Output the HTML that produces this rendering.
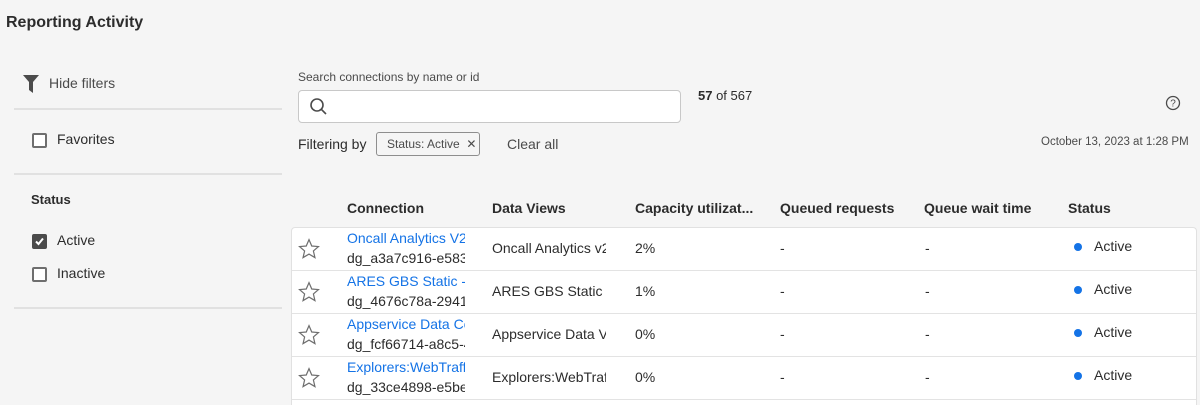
<!DOCTYPE html>
<html style="overflow:hidden;height:405px"><head><style>
body{margin:0;width:1200px;height:405px;background:#f5f5f5;font-family:"Liberation Sans",sans-serif;color:#2c2c2c;position:relative;overflow:hidden}
.a{position:absolute;white-space:nowrap}
.hr{position:absolute;left:14px;width:268px;height:2px;background:#e1e1e1}
.cb{position:absolute;width:11px;height:11px;border:2px solid #6e6e6e;border-radius:2px;background:#fff}
.th{position:absolute;top:200px;font-size:14px;font-weight:bold;color:#2c2c2c}
.tbl{position:absolute;left:291px;top:227px;width:904px;height:177px;background:#fff;border:1px solid #e1e1e1;border-bottom:none;border-radius:4px 4px 0 0;overflow:hidden}
.row{position:absolute;left:0;width:904px;height:42px;border-bottom:1px solid #e3e3e3}
.row div{position:absolute;white-space:nowrap;overflow:hidden;font-size:14px}
.lnk{color:#1473e6;left:55px;top:2px;width:118px}
.id{left:55px;top:22px;width:118px;color:#2c2c2c}
.dv{left:200px;top:12px;width:114px}
.cap{left:343px;top:12px}
.q{left:488px;top:12px}
.w{left:633px;top:12px}
.dot{left:782px;top:15px;width:8px;height:8px;border-radius:50%;background:#1473e6}
.st{left:802px;top:10px}
.star{left:6px;top:10px}
</style></head><body>
<div class="a" style="left:6px;top:14px;font-size:16px;font-weight:bold">Reporting Activity</div>
<svg class="a" style="left:23px;top:75px" width="16" height="18" viewBox="0 0 16 18"><path d="M0 0H16L10 7V18L6 15V7Z" fill="#4b4b4b"/></svg>
<div class="a" style="left:49px;top:75px;font-size:14px;color:#4b4b4b">Hide filters</div>
<div class="hr" style="top:108px"></div>
<div class="cb" style="left:32px;top:133px"></div>
<div class="a" style="left:57px;top:131px;font-size:14px">Favorites</div>
<div class="hr" style="top:173px"></div>
<div class="a" style="left:31px;top:192px;font-size:13px;font-weight:bold">Status</div>
<div class="cb" style="left:32px;top:234px;background:#4b4b4b;border-color:#4b4b4b"></div>
<svg class="a" style="left:33px;top:235px" width="13" height="13"><path d="M3 6.5L5.5 9L10 3.5" stroke="#fff" stroke-width="2" fill="none"/></svg>
<div class="a" style="left:57px;top:232px;font-size:14px">Active</div>
<div class="cb" style="left:32px;top:267px"></div>
<div class="a" style="left:57px;top:265px;font-size:14px">Inactive</div>
<div class="hr" style="top:307px"></div>

<div class="a" style="left:298px;top:70px;font-size:12px;color:#4b4b4b">Search connections by name or id</div>
<div class="a" style="left:298px;top:90px;width:381px;height:31px;background:#fff;border:1px solid #c8c8c8;border-radius:4px"></div>
<svg class="a" style="left:309px;top:97px" width="19" height="19"><circle cx="8" cy="8" r="6" stroke="#4b4b4b" stroke-width="1.6" fill="none"/><path d="M12.3 12.3L17 17" stroke="#4b4b4b" stroke-width="1.6"/></svg>
<div class="a" style="left:698px;top:88px;font-size:13px"><b>57</b> of 567</div>
<svg class="a" style="left:1165px;top:95px" width="16" height="16"><circle cx="8" cy="8" r="6.5" stroke="#4b4b4b" stroke-width="1.3" fill="none"/><text x="8" y="11.5" font-size="10" text-anchor="middle" fill="#4b4b4b" font-family="Liberation Sans">?</text></svg>
<div class="a" style="left:298px;top:136px;font-size:14px">Filtering by</div>
<div class="a" style="left:376px;top:132px;width:104px;height:24px;border:1px solid #8e8e8e;border-radius:3px;font-size:12px;color:#4b4b4b;line-height:23px;padding-left:10px;box-sizing:border-box">Status: Active &nbsp;✕</div>
<div class="a" style="left:507px;top:136px;font-size:14px;color:#4b4b4b">Clear all</div>
<div class="a" style="left:1041px;top:136px;font-size:11.5px;color:#4b4b4b">October 13, 2023 at 1:28 PM</div>

<div class="th" style="left:347px">Connection</div>
<div class="th" style="left:492px">Data Views</div>
<div class="th" style="left:635px">Capacity utilizat...</div>
<div class="th" style="left:780px">Queued requests</div>
<div class="th" style="left:924px">Queue wait time</div>
<div class="th" style="left:1068px">Status</div>

<div class="tbl">
<div class="row" style="top:0"><div class="star"><svg width="22" height="22" viewBox="0 0 20 20"><path d="M10 1.5L12.5 7.3L18.6 7.8L14 11.8L15.4 17.8L10 14.6L4.6 17.8L6 11.8L1.4 7.8L7.5 7.3Z" fill="none" stroke="#6e6e6e" stroke-width="1.1"/></svg></div><div class="lnk">Oncall Analytics V2</div><div class="id">dg_a3a7c916-e583-4</div><div class="dv">Oncall Analytics v2</div><div class="cap">2%</div><div class="q">-</div><div class="w">-</div><div class="dot"></div><div class="st">Active</div></div>
<div class="row" style="top:43px"><div class="star"><svg width="22" height="22" viewBox="0 0 20 20"><path d="M10 1.5L12.5 7.3L18.6 7.8L14 11.8L15.4 17.8L10 14.6L4.6 17.8L6 11.8L1.4 7.8L7.5 7.3Z" fill="none" stroke="#6e6e6e" stroke-width="1.1"/></svg></div><div class="lnk">ARES GBS Static - en</div><div class="id">dg_4676c78a-2941-4</div><div class="dv">ARES GBS Static - en</div><div class="cap">1%</div><div class="q">-</div><div class="w">-</div><div class="dot"></div><div class="st">Active</div></div>
<div class="row" style="top:86px"><div class="star"><svg width="22" height="22" viewBox="0 0 20 20"><path d="M10 1.5L12.5 7.3L18.6 7.8L14 11.8L15.4 17.8L10 14.6L4.6 17.8L6 11.8L1.4 7.8L7.5 7.3Z" fill="none" stroke="#6e6e6e" stroke-width="1.1"/></svg></div><div class="lnk">Appservice Data Con</div><div class="id">dg_fcf66714-a8c5-4</div><div class="dv">Appservice Data View</div><div class="cap">0%</div><div class="q">-</div><div class="w">-</div><div class="dot"></div><div class="st">Active</div></div>
<div class="row" style="top:129px"><div class="star"><svg width="22" height="22" viewBox="0 0 20 20"><path d="M10 1.5L12.5 7.3L18.6 7.8L14 11.8L15.4 17.8L10 14.6L4.6 17.8L6 11.8L1.4 7.8L7.5 7.3Z" fill="none" stroke="#6e6e6e" stroke-width="1.1"/></svg></div><div class="lnk">Explorers:WebTraffic</div><div class="id">dg_33ce4898-e5be-4</div><div class="dv">Explorers:WebTraffic</div><div class="cap">0%</div><div class="q">-</div><div class="w">-</div><div class="dot"></div><div class="st">Active</div></div>
<div class="row" style="top:172px;height:5px;border:none"><div class="lnk">Detection Connection</div></div>
</div>
</body></html>
